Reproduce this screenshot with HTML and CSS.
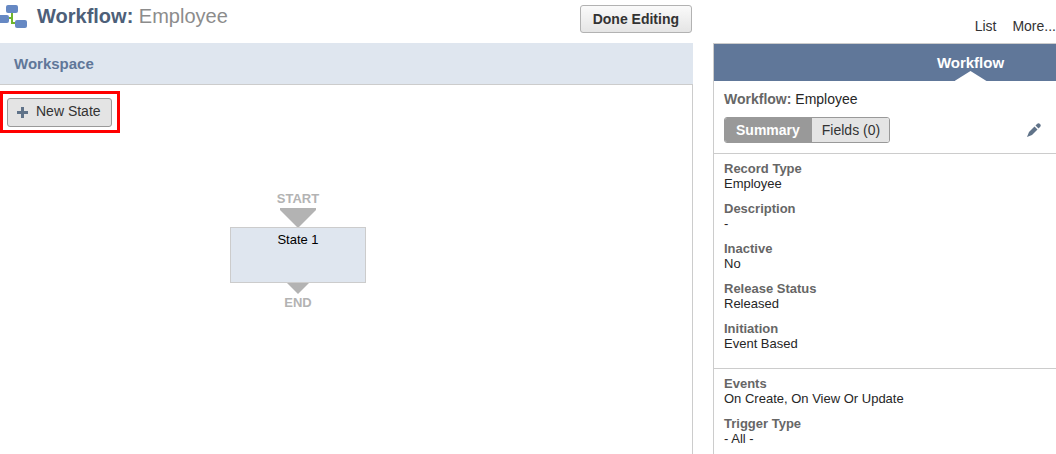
FILE: index.html
```html
<!DOCTYPE html>
<html lang="en">
<head>
  <meta charset="UTF-8">
  <title>Workflow: Employee</title>
  <meta name="viewport" content="width=device-width, initial-scale=1.0">
  <link rel="stylesheet" href="styles.css">
</head>
<body>
  <header class="page-header">
    <div class="header-main">
      <svg class="logo" width="27" height="28" viewBox="0 0 27 28" aria-hidden="true">
        <path d="M8 14H12M12 9V19H16" fill="none" stroke="#6fb52c" stroke-width="2"/>
        <rect x="6" y="1" width="12" height="8" rx="2" fill="#6688c3"/>
        <rect x="-3" y="11" width="12" height="8" rx="2" fill="#6688c3"/>
        <rect x="15" y="16" width="12" height="8" rx="2" fill="#6688c3"/>
      </svg>
      <h1><strong>Workflow:</strong> Employee</h1>
      <button type="button" class="btn done-btn">Done Editing</button>
    </div>
    <nav class="header-links">
      <a href="#">List</a>
      <a href="#">More...</a>
    </nav>
  </header>

  <main class="layout">
    <section class="workspace">
      <h2>Workspace</h2>
      <div class="canvas">
        <div class="highlight">
          <button type="button" class="btn new-btn">
            <svg width="11" height="11" viewBox="0 0 11 11" aria-hidden="true">
              <path d="M4 0H7V4H11V7H7V11H4V7H0V4H4Z" fill="#607389"/>
            </svg>
            New State
          </button>
        </div>
        <div class="diagram">
          <span class="marker">START</span>
          <svg width="36" height="19" viewBox="0 0 36 19" aria-hidden="true">
            <path d="M0 0H36V2L19 19H17L0 2Z" fill="#b3b3b3"/>
          </svg>
          <div class="state">State 1</div>
          <svg width="22" height="11" viewBox="0 0 22 11" aria-hidden="true">
            <path d="M0 0H22L11 11Z" fill="#b3b3b3"/>
          </svg>
          <span class="marker">END</span>
        </div>
      </div>
    </section>

    <aside class="panel">
      <div class="panel-tabs">
        <h2 class="panel-tab">Workflow</h2>
      </div>
      <div class="panel-head">
        <p><strong>Workflow:</strong> Employee</p>
        <div class="panel-actions">
          <div class="switch">
            <button type="button" class="active">Summary</button>
            <button type="button">Fields (0)</button>
          </div>
          <button type="button" class="edit-btn" aria-label="Edit">
            <svg width="14" height="14" viewBox="0 0 14 14" aria-hidden="true">
              <path d="M0 14L2 9L7.500 3.500L10.500 6.500L5 12Z" fill="#607389"/>
              <path d="M8.500 2.500L10 1Q11.500 -0.500 13 1Q14.500 2.500 13 4L11.500 5.500Z" fill="#607389"/>
            </svg>
          </button>
        </div>
      </div>
      <dl class="facts">
        <div><dt>Record Type</dt><dd>Employee</dd></div>
        <div><dt>Description</dt><dd>-</dd></div>
        <div><dt>Inactive</dt><dd>No</dd></div>
        <div><dt>Release Status</dt><dd>Released</dd></div>
        <div><dt>Initiation</dt><dd>Event Based</dd></div>
      </dl>
      <dl class="facts">
        <div><dt>Events</dt><dd>On Create, On View Or Update</dd></div>
        <div><dt>Trigger Type</dt><dd>- All -</dd></div>
      </dl>
    </aside>
  </main>
</body>
</html>
```

FILE: styles.css
```css
* {
  box-sizing: border-box;
}
body {
  font-family: "Liberation Sans", Arial, sans-serif;
  font-size: 14px;
  color: #262626;
  background: #fff;
  margin: 0;
  min-height: 100vh;
  display: flex;
  flex-direction: column;
}
h1, h2, p, dl, dd {
  margin: 0;
}
button {
  font: inherit;
  color: #333;
  cursor: pointer;
}
svg {
  display: block;
}

/* header and body share the same two columns */
.page-header, .layout {
  display: grid;
  grid-template-columns: minmax(0, 1fr) 343px;
  column-gap: 20px;
}
.page-header {
  height: 43px;
}
.header-main {
  display: flex;
  align-items: flex-start;
  padding-top: 4px;
}
.logo {
  margin-right: 10px;
}
h1 {
  font-size: 20px;
  line-height: 24px;
  font-weight: normal;
  color: #8c8c8c;
}
h1 strong {
  color: #4d5f79;
}
.btn {
  border: 1px solid #999;
  border-radius: 3px;
  background: #e4e4e4;
}
.done-btn {
  height: 28px;
  margin: 1px 1px 0 auto;
  padding: 0 12px;
  font-weight: bold;
  border-color: #b2b2b2;
  background: linear-gradient(#fafafa, #e5e5e5);
}
.header-links {
  display: flex;
  justify-content: flex-end;
  align-items: flex-end;
  gap: 16px;
  padding-bottom: 8px;
}
.header-links a {
  color: #333;
  line-height: 18px;
  text-decoration: none;
}

.layout {
  flex: 1;
}
.workspace {
  display: flex;
  flex-direction: column;
}
.workspace h2 {
  padding: 0 14px;
  font-size: 15px;
  line-height: 41px;
  color: #607799;
  background: #dfe6ef;
}
.canvas {
  position: relative;
  flex: 1;
  padding-top: 6px;
  border-top: 1px solid #ccc;
  border-right: 1px solid #ccc;
}
.highlight {
  width: fit-content;
  padding: 4px 5px 3px 4px;
  border: 3px solid #f00;
}
.new-btn {
  display: flex;
  align-items: center;
  gap: 8px;
  height: 29px;
  padding: 0 10px 3px 9px;
}
.new-btn svg {
  margin-top: 3px;
}
.diagram {
  position: absolute;
  left: 230px;
  top: 105px;
  width: 136px;
  display: flex;
  flex-direction: column;
  align-items: center;
}
.marker {
  font-size: 13px;
  font-weight: bold;
  line-height: 18px;
  color: #b3b3b3;
}
.state {
  width: 100%;
  height: 56px;
  padding-top: 4px;
  font-size: 13px;
  line-height: 15px;
  text-align: center;
  color: #000;
  background: #dfe6ef;
  border: 1px solid #ccc;
}

.panel {
  border-top: 1px solid #ccc;
  border-left: 1px solid #ccc;
}
.panel-tabs {
  display: grid;
  grid-template-columns: 1fr 1fr;
  background: #607799;
}
.panel-tab {
  grid-column: 2;
  padding-top: 10px;
  font-size: 15px;
  line-height: 17px;
  text-align: center;
  color: #fff;
}
.panel-tab::after {
  content: "";
  display: block;
  width: 32px;
  height: 10px;
  margin: 0 auto;
  background: #fff;
  clip-path: polygon(50% 0, 100% 100%, 0 100%);
}
.panel-head {
  padding: 10px 15px 10px 10px;
}
.panel-head p {
  line-height: 16px;
}
.panel-head strong {
  color: #666;
}
.panel-actions {
  display: flex;
  justify-content: space-between;
  align-items: center;
  margin-top: 10px;
}
.switch {
  display: flex;
  border: 1px solid #999;
  border-radius: 3px;
  overflow: hidden;
}
.switch button {
  height: 24px;
  padding: 0 9px 0 10px;
  border: none;
  background: #e4e4e4;
}
.switch .active {
  padding: 0 12px 0 11px;
  font-weight: bold;
  color: #fff;
  background: #999;
}
.edit-btn {
  padding: 0;
  border: none;
  background: none;
}

.facts {
  display: flex;
  flex-direction: column;
  gap: 10px;
  padding: 7px 10px 17px;
  font-size: 13px;
  line-height: 15px;
  border-top: 1px solid #ccc;
}
.facts:last-child {
  padding-bottom: 0;
}
.facts dt {
  font-weight: bold;
  color: #666;
}
```
